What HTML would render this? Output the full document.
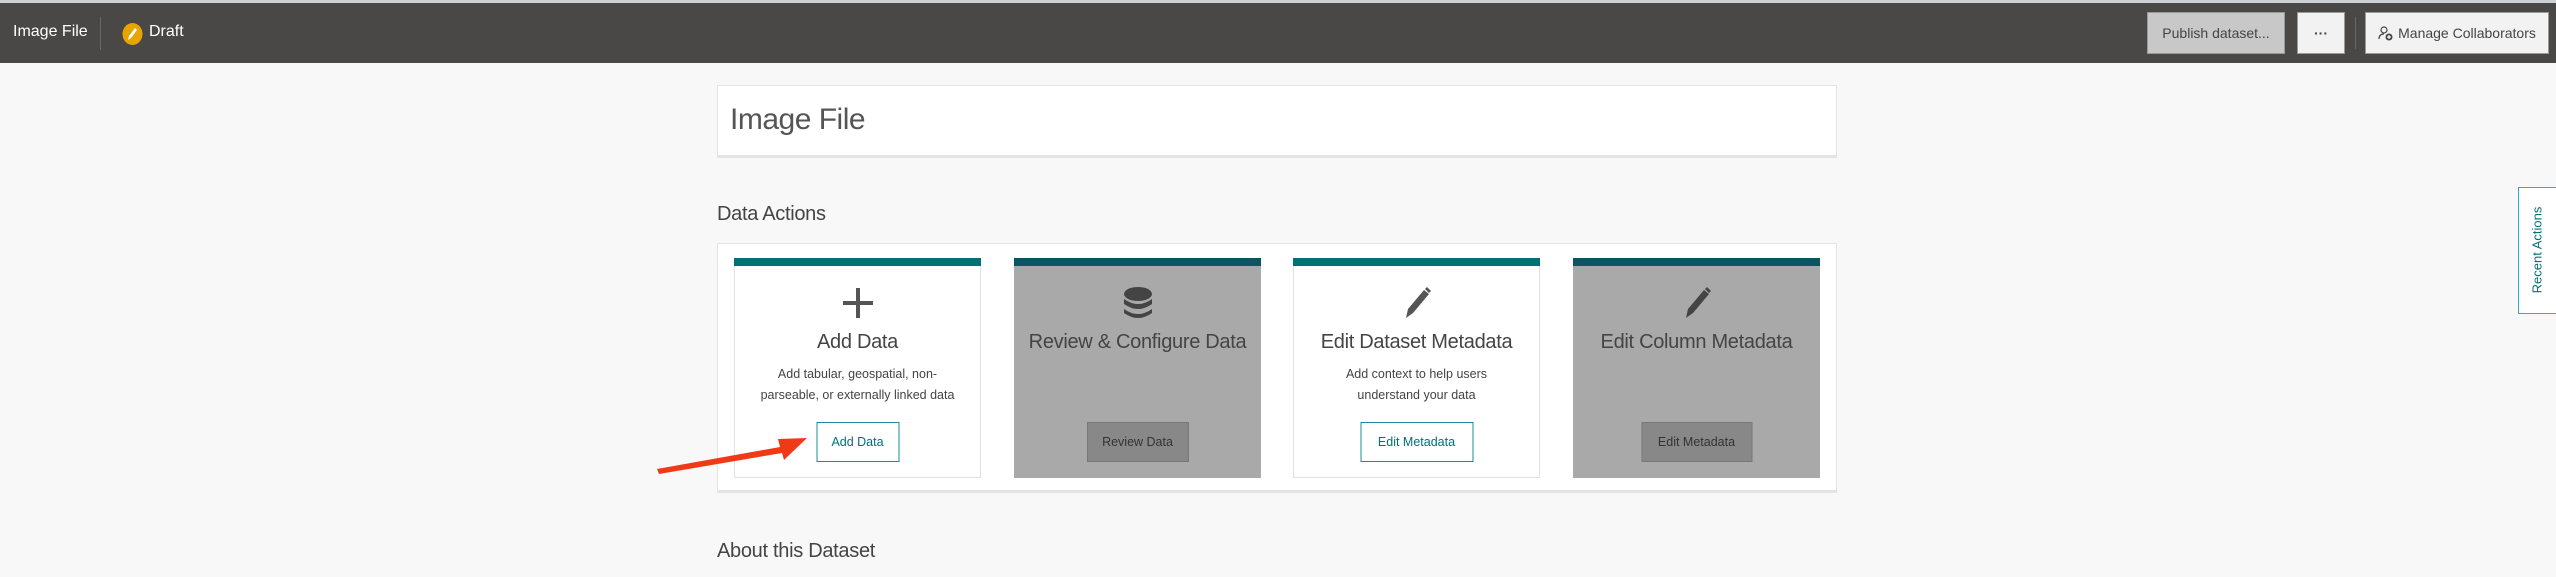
<!DOCTYPE html>
<html><head><meta charset="utf-8"><style>
*{box-sizing:border-box;margin:0;padding:0}
body{width:2556px;height:577px;background:#f8f8f8;font-family:"Liberation Sans",sans-serif;position:relative;overflow:hidden;color:#4a4a4a}
.abs{position:absolute}
.top{left:0;top:0;width:2556px;height:63px;background:#4a4846;border-top:3px solid #cfd0d4}
.btn{position:absolute;display:flex;align-items:center;justify-content:center;font-size:14px}
.card{position:absolute;top:258px;width:247px;height:220px;border:1px solid #e2e2e2;background:#fff;text-align:center}
.card.g{background:#a9a9a9;border-color:#a9a9a9}
.card .bar{height:8px;background:#007079;margin:-1px -1px 0}
.card.g .bar{background:#0b5560}
.card h3{position:absolute;left:0;right:0;top:72px;font-weight:normal;font-size:20px;color:#444;white-space:nowrap;letter-spacing:-0.3px}
.card p{position:absolute;left:0;right:0;top:105px;font-size:12.5px;line-height:21px;color:#444}
.card .b{position:absolute;top:163px;height:40px;left:50%;transform:translateX(-50%);display:flex;align-items:center;justify-content:center;font-size:12.5px;border:1px solid #1b8c96;color:#007079;background:#fff;white-space:nowrap}
.card.g .b{background:#888;border-color:#777;color:#333}
.card svg{position:absolute;left:50%;top:28px;transform:translateX(-50%)}
</style></head><body>
<div class="abs top"></div>
<div class="abs" style="left:13px;top:23px;color:#fff;font-size:16px">Image File</div>
<div class="abs" style="left:100px;top:17px;width:1px;height:33px;background:#6a6866"></div>
<svg class="abs" style="left:122px;top:23px" width="21" height="22" viewBox="0 0 21 22"><ellipse cx="10.5" cy="11" rx="10" ry="11" fill="#e8a500"/><path d="M6 17 L7 13 L13 5 L15 7 L9 15 Z" fill="#fff"/></svg>
<div class="abs" style="left:149px;top:23px;color:#fff;font-size:16px">Draft</div>
<div class="btn" style="left:2147px;top:12px;width:138px;height:42px;background:#c8c8c8;border:1px solid #999;color:#444">Publish dataset...</div>
<div class="btn" style="left:2297px;top:12px;width:48px;height:42px;background:#f2f2f2;border:1px solid #999;color:#444;font-weight:bold">···</div>
<div class="abs" style="left:2355px;top:17px;width:1px;height:32px;background:#6a6866"></div>
<div class="btn" style="left:2365px;top:12px;width:184px;height:42px;background:#f2f2f2;border:1px solid #999;color:#444"><svg width="16" height="16" viewBox="0 0 16 16" style="margin-right:4px"><circle cx="6" cy="5" r="3" fill="none" stroke="#444" stroke-width="1.2"/><path d="M1 14 Q1 9 6 9" fill="none" stroke="#444" stroke-width="1.2"/><circle cx="11" cy="12" r="3.5" fill="#444"/><path d="M11 10v4M9 12h4" stroke="#fff" stroke-width="1.2"/></svg>Manage Collaborators</div>
<div class="abs" style="left:717px;top:85px;width:1120px;height:73px;background:#fff;border:1px solid #e4e4e4;border-bottom:3px solid #e4e4e4"></div>
<div class="abs" style="left:730px;top:103px;font-size:30px;color:#555;letter-spacing:-0.5px">Image File</div>
<div class="abs" style="left:717px;top:203px;font-size:20px;color:#444;letter-spacing:-0.3px">Data Actions</div>
<div class="abs" style="left:717px;top:243px;width:1120px;height:250px;background:#fff;border:1px solid #e4e4e4;border-bottom:3px solid #e4e4e4"></div>
<div class="card" style="left:734px"><div class="bar"></div>
<svg width="32" height="32" viewBox="0 0 32 32"><path d="M14 1h4v13h13v4H18v13h-4V18H1v-4h13z" fill="#555"/></svg>
<h3>Add Data</h3><p>Add tabular, geospatial, non-<br>parseable, or externally linked data</p><div class="b" style="width:83px">Add Data</div></div>
<div class="card g" style="left:1014px"><div class="bar"></div>
<svg width="30" height="34" viewBox="0 0 30 34"><ellipse cx="15" cy="7" rx="14" ry="7" fill="#444"/><path d="M1 12 Q15 22 29 12 V17 Q15 27 1 17Z" fill="#444"/><path d="M1 22 Q15 32 29 22 V26 Q15 36 1 26Z" fill="#444"/></svg>
<h3>Review &amp; Configure Data</h3><div class="b" style="width:102px">Review Data</div></div>
<div class="card" style="left:1293px"><div class="bar"></div>
<svg width="30" height="32" viewBox="0 0 30 32"><path d="M4 31 L6 22 L22 3 L27 7 L11 26 Z" fill="#555"/><path d="M23 2 L25 0 L29 4 L27 6Z" fill="#555"/></svg>
<h3>Edit Dataset Metadata</h3><p>Add context to help users<br>understand your data</p><div class="b" style="width:113px">Edit Metadata</div></div>
<div class="card g" style="left:1573px"><div class="bar"></div>
<svg width="30" height="32" viewBox="0 0 30 32"><path d="M4 31 L6 22 L22 3 L27 7 L11 26 Z" fill="#444"/><path d="M23 2 L25 0 L29 4 L27 6Z" fill="#444"/></svg>
<h3>Edit Column Metadata</h3><div class="b" style="width:111px">Edit Metadata</div></div>
<svg class="abs" style="left:650px;top:425px" width="170" height="55" viewBox="0 0 170 55"><path d="M7 44 L130 22 L128 14 L157 13 L134 35 L132 28 L9 49Z" fill="#f03a17"/></svg>
<div class="abs" style="left:717px;top:540px;font-size:20px;color:#444;letter-spacing:-0.3px">About this Dataset</div>
<div class="abs" style="left:2518px;top:187px;width:40px;height:127px;background:#fff;border:1px solid #28b3bd;border-right:none"></div>
<div class="abs" style="left:2537px;top:250px;transform:translate(-50%,-50%) rotate(-90deg);color:#007079;font-size:13px;white-space:nowrap">Recent Actions</div>
</body></html>
